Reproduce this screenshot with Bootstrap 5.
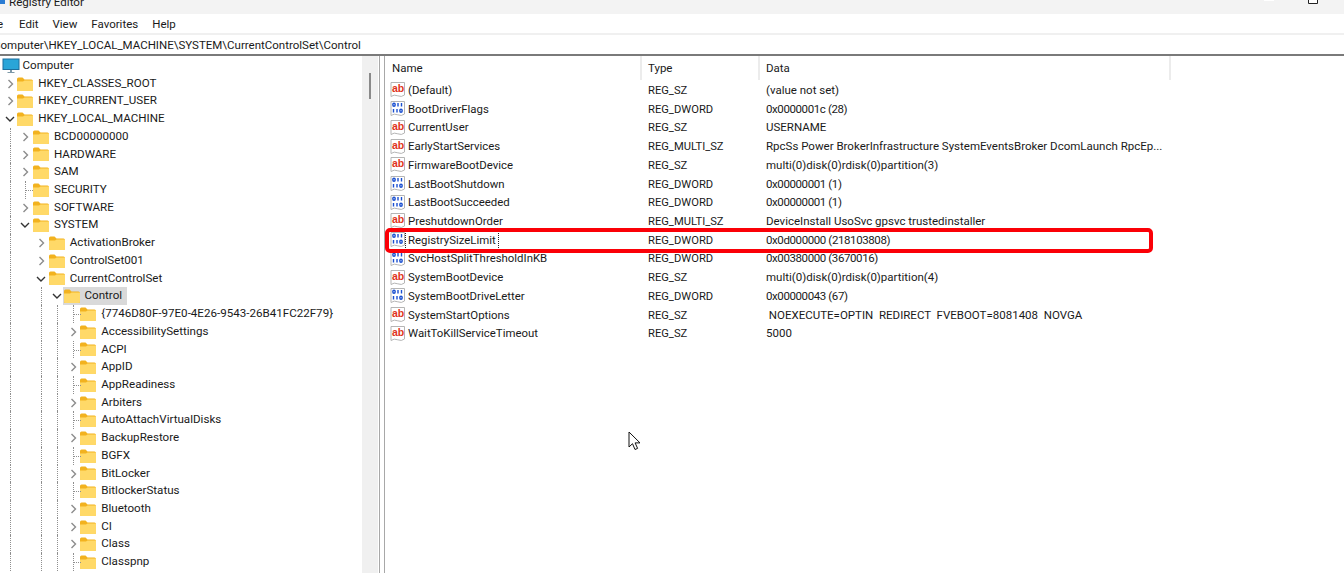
<!doctype html>
<html lang="en"><head><meta charset="utf-8"><title>Registry Editor</title>
<link rel="stylesheet" href="https://cdn.jsdelivr.net/npm/bootstrap@5.3.0/dist/css/bootstrap.min.css">
<style>
html,body{height:573px;overflow:hidden;background:#fff}
body{font:11.5px/1 Roboto,"Noto Sans",sans-serif;color:#1a1a1a}
.winbar{height:14px;background:#f3f3f3;overflow:hidden;position:relative}
.wintitle{margin:-6px 0 0 9px;font-size:11.6px;line-height:16px}
.menubar{height:19px;padding-left:19px;gap:14px;line-height:21px;overflow:hidden}
.addr{height:21px;border-top:2px solid #f0f0f0;line-height:20px;white-space:nowrap;overflow:hidden}
.addr span{margin-left:-7px}
.panes{height:519px;border-top:2px solid #7a7a7a;overflow:hidden;position:relative}
.treepane{width:362px;padding:1px 0 0 1.5px;overflow:hidden;font-size:11.6px}
.sbar{width:16px;background:#f0f0f0;position:relative}
.sthumb{position:absolute;left:7px;top:17px;width:2px;height:26px;background:#8a8a8a}
.split{width:6px;border-left:1px solid #a8a8a8;border-right:1px solid #a8a8a8;margin-left:1px}
.tnode{height:17.72px;line-height:17.72px;white-space:nowrap}
.cell{width:15.75px;height:100%;flex:none;position:relative}
.gd::before,.tee::before{content:"";position:absolute;left:8px;top:0;bottom:0;border-left:1px dotted #8f8f8f}
.tee::after{content:"";position:absolute;left:9px;top:9px;width:7px;border-top:1px dotted #8f8f8f}
.cv svg{position:absolute;left:3px;top:4px;width:10px;height:10px}
.fold{width:16px;height:14px;flex:none;margin-right:5px}
.comp{width:18px;height:16px;flex:none;margin-right:3px}
.tname{padding:0 4px 0 0}
.selname{background:#d9d9d9;padding:0 5px 0 1px;margin-left:-2px;height:100%}
.listpane{flex:1;min-width:0;padding-left:3px}
.lhead{height:25px;line-height:24px}
.colname{width:254px;padding-left:4px;border-right:2px solid #ececec;height:24px}
.coltype{width:118px;padding-left:6px;border-right:2px solid #ececec;height:24px}
.coldata{width:411px;padding-left:6px;border-right:2px solid #ececec;height:24px}
.lrow{height:18.72px;line-height:18.72px;white-space:nowrap}
.rname{width:254px;flex:none;padding-left:2px;font-size:11.4px}
.rtype{width:118px;flex:none;padding:1px 0 0 6px;font-size:11.2px}
.rdata{padding-left:6px;white-space:pre}
.numv{letter-spacing:-.4px}
.ric{width:16px;height:16px;margin-right:2px;flex:none}
.focusd{outline:1px dotted #222;padding:0 2px;margin-left:-2px;line-height:18px}
.redbox{position:absolute;left:385px;top:172px;width:768px;height:25px;border:4px solid #fb0007;border-radius:5px}
.cursor{position:absolute;left:628px;top:375px;width:13px;height:20px}
.winic{position:absolute;top:0;height:4px}
.ic-a{left:0;width:6px}.ic-b{left:1264px;width:10px}.ic-c{left:1308px;width:10px}
.fileclip{margin-left:-34px;width:20px}
</style></head><body>
<svg width="0" height="0" class="position-absolute">
<defs>
<symbol id="f" viewBox="0 0 16 14"><path d="M0 2q0-1.500 1.500-1.500h4l2 2h7q1.500 0 1.500 1.500v8.500q0 1.500-1.500 1.500h-13q-1.500 0-1.500-1.500z" fill="#f2b21f"/><path d="M0 4.500h6l1.500-1h8.500v9q0 1.500-1.500 1.500h-13q-1.500 0-1.500-1.500z" fill="#ffd968"/></symbol>
<symbol id="r" viewBox="0 0 10 10"><path d="M3.500 1l4 4-4 4" fill="none" stroke="#8c8c8c" stroke-width="1.400"/></symbol>
<symbol id="d" viewBox="0 0 10 10"><path d="M1 3l4 4 4-4" fill="none" stroke="#333" stroke-width="1.400"/></symbol>
<symbol id="pg" viewBox="0 0 16 16"><path d="M1 .5h13.500v12.500q-3 2.500-6.700.800t-6.800.700z" fill="#fff" stroke="#b5b5b5"/></symbol>
<symbol id="ab" viewBox="0 0 16 16"><use href="#pg"/><text x="2" y="10" font-family="Liberation Sans" font-weight="700" font-size="10.500" fill="#e0341c">ab</text></symbol>
<symbol id="bn" viewBox="0 0 16 16"><use href="#pg"/><g fill="none" stroke="#1a4fd0" stroke-width="1.400"><ellipse cx="4" cy="3.800" rx="1.200" ry="1.500"/><path d="M8 2v3.500M11.500 2v3.500"/><path d="M3.500 8v3.500M7 8v3.500"/><ellipse cx="11" cy="9.800" rx="1.200" ry="1.500"/></g></symbol>
</defs></svg>

<div class="winbar">
<svg class="winic ic-a" viewBox="0 0 6 4"><rect width="5" height="4" fill="#2b7cd3"/></svg>
<svg class="winic ic-b" viewBox="0 0 10 4"><rect width="10" height="1" fill="#fff"/></svg>
<svg class="winic ic-c" viewBox="0 0 10 4"><path d="M.5 0v3.500h9V0" fill="#fff" stroke="#222"/></svg>
<div class="wintitle">Registry Editor</div></div>
<div class="menubar d-flex"><span class="fileclip">File</span><span>Edit</span><span>View</span><span>Favorites</span><span>Help</span></div>
<div class="addr"><span>Computer\HKEY_LOCAL_MACHINE\SYSTEM\CurrentControlSet\Control</span></div>
<div class="panes d-flex">
<div class="treepane" id="tree"></div>
<div class="sbar"><div class="sthumb"></div></div>
<div class="split"></div>
<div class="listpane">
<div class="lhead d-flex"><div class="colname">Name</div><div class="coltype">Type</div><div class="coldata">Data</div></div>
<div id="list"></div>
</div>
<div class="redbox"></div>
<svg class="cursor" viewBox="0 0 13 20"><path d="M1 1v15l3.500-3.300 2.500 5.800 2.600-1.100-2.500-5.500h4.900z" fill="#fff" stroke="#111" stroke-width="1"/></svg>
</div>
<script>
var P=['g','e','g','g'];
function k(x){return P.concat([x])}
var T=[
[0,'c','Computer'],
[['r'],'HKEY_CLASSES_ROOT'],[['r'],'HKEY_CURRENT_USER'],[['d'],'HKEY_LOCAL_MACHINE'],
[['g','r'],'BCD00000000'],[['g','r'],'HARDWARE'],[['g','r'],'SAM'],[['g','t'],'SECURITY'],[['g','r'],'SOFTWARE'],[['g','d'],'SYSTEM'],
[['g','e','r'],'ActivationBroker'],[['g','e','r'],'ControlSet001'],[['g','e','d'],'CurrentControlSet'],
[['g','e','g','d'],'Control','s'],
[k('t'),'{7746D80F-97E0-4E26-9543-26B41FC22F79}'],
[k('r'),'AccessibilitySettings'],[k('t'),'ACPI'],[k('r'),'AppID'],[k('t'),'AppReadiness'],[k('r'),'Arbiters'],[k('t'),'AutoAttachVirtualDisks'],[k('r'),'BackupRestore'],[k('t'),'BGFX'],[k('r'),'BitLocker'],[k('t'),'BitlockerStatus'],[k('r'),'Bluetooth'],[k('r'),'CI'],[k('r'),'Class'],[k('t'),'Classpnp']];
var h='';
T.forEach(function(n){
 if(n[0]===0){h+='<div class="tnode d-flex align-items-center"><svg class="comp" viewBox="0 0 18 16"><rect x="1" y="1" width="16" height="10.500" fill="#2aa5d8" stroke="#1d6f9e"/><path d="M8 12h2v2h2.500v1h-7v-1H8z" fill="#7d99a8"/></svg><span>Computer</span></div>';return}
 var cells=n[0].map(function(c){
  if(c=='g')return '<div class="cell gd"></div>';
  if(c=='e')return '<div class="cell"></div>';
  if(c=='t')return '<div class="cell tee"></div>';
  return '<div class="cell cv"><svg><use href="#'+c+'"/></svg></div>';}).join('');
 var ic='<svg class="fold"><use href="#f"/></svg>';
 h+='<div class="tnode d-flex align-items-center">'+cells+(n[2]?'<span class="selname d-flex align-items-center">'+ic+n[1]+'</span>':ic+'<span class="tname">'+n[1]+'</span>')+'</div>';
});
document.getElementById('tree').innerHTML=h;
var L=[['ab','(Default)','REG_SZ','(value not set)'],['bn','BootDriverFlags','REG_DWORD','0x0000001c (28)',0,1],['ab','CurrentUser','REG_SZ','USERNAME'],['ab','EarlyStartServices','REG_MULTI_SZ','RpcSs Power BrokerInfrastructure SystemEventsBroker DcomLaunch RpcEp...'],['ab','FirmwareBootDevice','REG_SZ','multi(0)disk(0)rdisk(0)partition(3)'],['bn','LastBootShutdown','REG_DWORD','0x00000001 (1)',0,1],['bn','LastBootSucceeded','REG_DWORD','0x00000001 (1)',0,1],['ab','PreshutdownOrder','REG_MULTI_SZ','DeviceInstall UsoSvc gpsvc trustedinstaller'],['bn','RegistrySizeLimit','REG_DWORD','0x0d000000 (218103808)','f',1],['bn','SvcHostSplitThresholdInKB','REG_DWORD','0x00380000 (3670016)',0,1],['ab','SystemBootDevice','REG_SZ','multi(0)disk(0)rdisk(0)partition(4)'],['bn','SystemBootDriveLetter','REG_DWORD','0x00000043 (67)',0,1],['ab','SystemStartOptions','REG_SZ',' NOEXECUTE=OPTIN  REDIRECT  FVEBOOT=8081408  NOVGA'],['ab','WaitToKillServiceTimeout','REG_SZ','5000']];
document.getElementById('list').innerHTML=L.map(function(r){return '<div class="lrow d-flex"><div class="rname d-flex align-items-center"><svg class="ric"><use href="#'+r[0]+'"/></svg><span'+(r[4]?' class="focusd"':'')+'>'+r[1]+'</span></div><div class="rtype">'+r[2]+'</div><div class="rdata'+(r[5]?' numv':'')+'">'+r[3]+'</div></div>'}).join('');
</script>
<script src="https://cdn.jsdelivr.net/npm/bootstrap@5.3.0/dist/js/bootstrap.bundle.min.js"></script>
</body></html>
